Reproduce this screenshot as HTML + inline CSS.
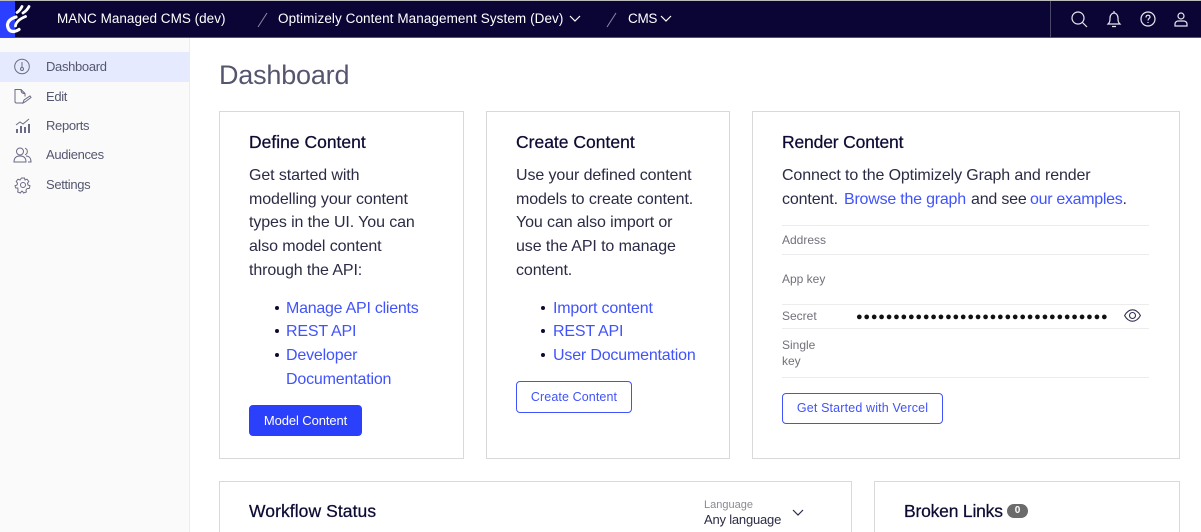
<!DOCTYPE html>
<html><head><meta charset="utf-8"><style>
html,body{margin:0;padding:0;width:1201px;height:532px;overflow:hidden}
body{background:#fff;font-family:"Liberation Sans",sans-serif;color:#2a2a45}
#p{position:absolute;left:0;top:0;width:1201px;height:532px;overflow:hidden;background:#fff}
.t{position:absolute;white-space:nowrap}
.b{font-size:16px;line-height:24px;letter-spacing:-.1px;color:#2b2b45}
.a{color:#4153fa;letter-spacing:-.18px}
.h{font-size:17.500px;line-height:24px;letter-spacing:0;color:#0d0b33;-webkit-text-stroke:.25px #0d0b33}
.w{font-size:13.500px;line-height:20px;color:#fff;letter-spacing:.02px}
.n{font-size:13px;line-height:20px;color:#555770;letter-spacing:-.33px;left:46px}
.l{font-size:12px;line-height:16px;color:#71717a;letter-spacing:0;left:782px}
.box{position:absolute;border:1px solid #d9d9d9;box-sizing:border-box;background:#fff}
.ln{position:absolute;left:782px;width:367px;height:1px;background:#ececec}
.dot{position:absolute;width:4px;height:4px;border-radius:50%;background:#0d0b33}
svg{position:absolute;overflow:visible}
</style></head><body><div id="p">
<div style="position:absolute;left:0;top:0;width:1201px;height:38px;background:#0a0535;border-top:1px solid #bbb;box-sizing:border-box;border-bottom:1px solid #55536f"></div>
<div style="position:absolute;left:0;top:1px;width:15px;height:36px;background:#2a3fff"></div>
<svg style="left:0;top:0" width="40" height="38" fill="none" stroke="#fff" stroke-linecap="round"><path d="M17 12.500Q20 10.500 22 6.500M23 13Q27 10.500 29 6.500" stroke-width="2.800"/><path d="M16 17Q7.500 19.500 7.500 25.500Q8.500 32 14 31.500Q17 31 19 29.500" stroke-width="3.200"/><path d="M25.500 16.500Q16 20.500 15.500 26" stroke-width="2.800"/></svg>
<div class="t w" style="left:57px;top:9px">MANC Managed CMS (dev)</div>
<svg style="left:257px;top:12px" width="14" height="16" fill="none" stroke="#8b8ba8"><path d="M1 15L10 1"/></svg>
<div class="t w" style="left:278px;top:9px;letter-spacing:.08px">Optimizely Content Management System (Dev)</div>
<svg style="left:569px;top:15px" width="12" height="8" fill="none" stroke="#fff" stroke-width="1.200"><path d="M1 1l5 5 5-5"/></svg>
<svg style="left:606px;top:12px" width="14" height="16" fill="none" stroke="#8b8ba8"><path d="M1 15L10 1"/></svg>
<div class="t w" style="left:628px;top:9px;letter-spacing:-.3px">CMS</div>
<svg style="left:660px;top:15px" width="12" height="8" fill="none" stroke="#fff" stroke-width="1.200"><path d="M1 1l5 5 5-5"/></svg>
<div style="position:absolute;left:1050px;top:1px;width:1px;height:36px;background:#4a4868"></div>
<svg style="left:1071px;top:11px" width="18" height="18" fill="none" stroke="#e8e8f0" stroke-width="1.200"><circle cx="7" cy="7" r="6"/><path d="M11.500 11.500L16 16"/></svg>
<svg style="left:1107px;top:11px" width="14" height="17" fill="none" stroke="#e8e8f0" stroke-width="1.200"><path d="M1 13c2-2 2-3 2-6 0-3 2-5 4-5s4 2 4 5c0 3 0 4 2 6z"/><path d="M7 0v2M5 15.500h4"/></svg>
<svg style="left:1140px;top:11px" width="16" height="16" fill="none" stroke="#e8e8f0" stroke-width="1.200"><circle cx="8" cy="8" r="7"/><path d="M6 6.500c0-3 4-3 4-.5 0 1.500-2 1.500-2 3.500M8 11v1"/></svg>
<svg style="left:1174px;top:12px" width="14" height="15" fill="none" stroke="#e8e8f0" stroke-width="1.200"><circle cx="7" cy="4" r="3"/><path d="M1 14v-2c0-2 2-3 3-3h6c1 0 3 1 3 3v2z"/></svg>

<div style="position:absolute;left:0;top:38px;width:190px;height:494px;background:#fafafa;border-right:1px solid #ececec;box-sizing:border-box"></div>
<div style="position:absolute;left:0;top:52px;width:189px;height:30px;background:#e5eaff"></div>
<div class="t n" style="top:57px">Dashboard</div>
<div class="t n" style="top:87px">Edit</div>
<div class="t n" style="top:116px">Reports</div>
<div class="t n" style="top:145px">Audiences</div>
<div class="t n" style="top:175px">Settings</div>
<svg style="left:14px;top:58px" width="17" height="17" fill="none" stroke="#6b6b85"><circle cx="8" cy="8.500" r="7.300"/><circle cx="8" cy="11" r="1.500"/><path d="M8 4v5.500M4 7.500h.1M12 7.500h.1M5.500 5h.1M10.500 5h.1"/></svg>
<svg style="left:14px;top:88px" width="18" height="17" fill="none" stroke="#6b6b85"><path d="M9 15H2.500Q1 15 1 13.500V1.500H7l4 4v3"/><path d="M7 1.500c0 3 1 4 4 4M9 15l1-3 6-4 1 1.500-6 4.500z"/></svg>
<svg style="left:15px;top:118px" width="16" height="15" fill="none" stroke="#6b6b85"><path d="M1 7l4-3 3 2 6-5"/><path d="M2 15v-4M6 15V8M10 15V9M14 15V6" stroke-width="2"/></svg>
<svg style="left:13px;top:147px" width="19" height="16" fill="none" stroke="#6b6b85"><circle cx="7" cy="4.500" r="3.500"/><path d="M1 15c0-4 2-6 6-6s6 2 6 6zM12 1.200a3.500 3.500 0 0 1 0 6.600M13 9c3 0 5 2 5 6h-3"/></svg>
<svg style="left:15px;top:177px" width="16" height="16" fill="none" stroke="#6b6b85"><circle cx="8" cy="8" r="2.500"/><path d="M6.500 1h3l.5 2 2-.8 1.800 2.300-1.300 1.700.5 1.800 2 .8-.8 2.700-2 0-1.200 1.500.3 2-2.800 1-1-1.700h-1l-1 1.700-2.800-1 .3-2L2.800 11l-2 0L0 8.800l2-.8.500-1.800L1.200 4.500 3 2.200l2 .8z"/></svg>

<div class="t" style="left:219px;top:57px;font-size:27px;line-height:36px;color:#55556f;letter-spacing:-.2px">Dashboard</div>

<div class="box" style="left:219px;top:111px;width:245px;height:348px"></div>
<div class="box" style="left:486px;top:111px;width:244px;height:348px"></div>
<div class="box" style="left:752px;top:111px;width:428px;height:348px"></div>
<div class="box" style="left:219px;top:481px;width:633px;height:70px"></div>
<div class="box" style="left:874px;top:481px;width:306px;height:70px"></div>

<div class="t h" style="left:249px;top:130px">Define Content</div>
<div class="t b" style="left:249px;top:164px">Get started with</div>
<div class="t b" style="left:249px;top:188px">modelling your content</div>
<div class="t b" style="left:249px;top:211px">types in the UI. You can</div>
<div class="t b" style="left:249px;top:235px">also model content</div>
<div class="t b" style="left:249px;top:259px">through the API:</div>
<div class="dot" style="left:275px;top:306px"></div>
<div class="dot" style="left:275px;top:329px"></div>
<div class="dot" style="left:275px;top:353px"></div>
<div class="t b a" style="left:286px;top:297px;letter-spacing:-.25px">Manage API clients</div>
<div class="t b a" style="left:286px;top:320px">REST API</div>
<div class="t b a" style="left:286px;top:344px">Developer</div>
<div class="t b a" style="left:286px;top:368px">Documentation</div>
<div class="t" style="left:249px;top:405px;width:113px;height:31px;background:#2b40fb;border-radius:4px;color:#fff;font-size:13px;line-height:31px;text-align:center;letter-spacing:-.1px">Model Content</div>

<div class="t h" style="left:516px;top:130px">Create Content</div>
<div class="t b" style="left:516px;top:164px">Use your defined content</div>
<div class="t b" style="left:516px;top:188px">models to create content.</div>
<div class="t b" style="left:516px;top:211px">You can also import or</div>
<div class="t b" style="left:516px;top:235px">use the API to manage</div>
<div class="t b" style="left:516px;top:259px">content.</div>
<div class="dot" style="left:541px;top:306px"></div>
<div class="dot" style="left:541px;top:329px"></div>
<div class="dot" style="left:541px;top:353px"></div>
<div class="t b a" style="left:553px;top:297px">Import content</div>
<div class="t b a" style="left:553px;top:320px">REST API</div>
<div class="t b a" style="left:553px;top:344px">User Documentation</div>
<div class="t" style="left:516px;top:381px;width:116px;height:32px;box-sizing:border-box;border:1px solid #4153fa;border-radius:4px;color:#4153fa;font-size:12.500px;line-height:30px;text-align:center;letter-spacing:.1px">Create Content</div>

<div class="t h" style="left:782px;top:130px;letter-spacing:-.16px">Render Content</div>
<div class="t b" style="left:782px;top:164px;letter-spacing:-.13px">Connect to the Optimizely Graph and render</div>
<div class="t b" style="left:782px;top:188px;letter-spacing:-.13px">content.</div>
<div class="t b a" style="left:844px;top:188px;letter-spacing:-.22px">Browse the graph</div>
<div class="t b" style="left:971px;top:188px;letter-spacing:-.2px">and see</div>
<div class="t b" style="left:1030px;top:188px;letter-spacing:-.2px"><span class="a" style="letter-spacing:-.3px">our examples</span>.</div>
<div class="ln" style="top:225px"></div>
<div class="t l" style="top:232px">Address</div>
<div class="ln" style="top:254px"></div>
<div class="t l" style="top:271px">App key</div>
<div class="ln" style="top:304px"></div>
<div class="t l" style="top:308px">Secret</div>
<div class="t" style="left:856px;top:308px;font-size:11px;line-height:18px;font-weight:bold;color:#111;letter-spacing:.78px">●●●●●●●●●●●●●●●●●●●●●●●●●●●●●●●●●●</div>
<svg style="left:1124px;top:309px" width="17" height="13" fill="none" stroke="#2f2f52" stroke-width="1.100"><path d="M.6 6.500C3 2 6 .8 8.500.8s5.500 1.200 7.900 5.700c-2.400 4.500-5.400 5.700-7.900 5.700S3 11 .6 6.500z"/><circle cx="8.500" cy="6.500" r="3"/></svg>
<div class="ln" style="top:328px"></div>
<div class="t l" style="top:337px">Single</div>
<div class="t l" style="top:353px">key</div>
<div class="ln" style="top:377px"></div>
<div class="t" style="left:782px;top:393px;width:161px;height:31px;box-sizing:border-box;border:1px solid #4153fa;border-radius:4px;color:#4153fa;font-size:12.500px;line-height:29px;text-align:center;letter-spacing:.15px">Get Started with Vercel</div>

<div class="t h" style="left:249px;top:499px;letter-spacing:.07px">Workflow Status</div>
<div class="t" style="left:704px;top:498px;font-size:11px;line-height:15px;color:#8a8a94;letter-spacing:0">Language</div>
<div class="t" style="left:704px;top:511px;font-size:13px;line-height:18px;color:#2b2b45;letter-spacing:-.2px">Any language</div>
<svg style="left:792px;top:509px" width="12" height="8" fill="none" stroke="#2b2b45" stroke-width="1.200"><path d="M1 1l5 5 5-5"/></svg>
<div class="t h" style="left:904px;top:499px;letter-spacing:-.2px">Broken Links</div>
<div class="t" style="left:1007px;top:504px;width:21px;height:14px;border-radius:7px;background:#6b6b6b;color:#fff;font-size:10px;font-weight:bold;line-height:14px;text-align:center">0</div>
</div></body></html>
